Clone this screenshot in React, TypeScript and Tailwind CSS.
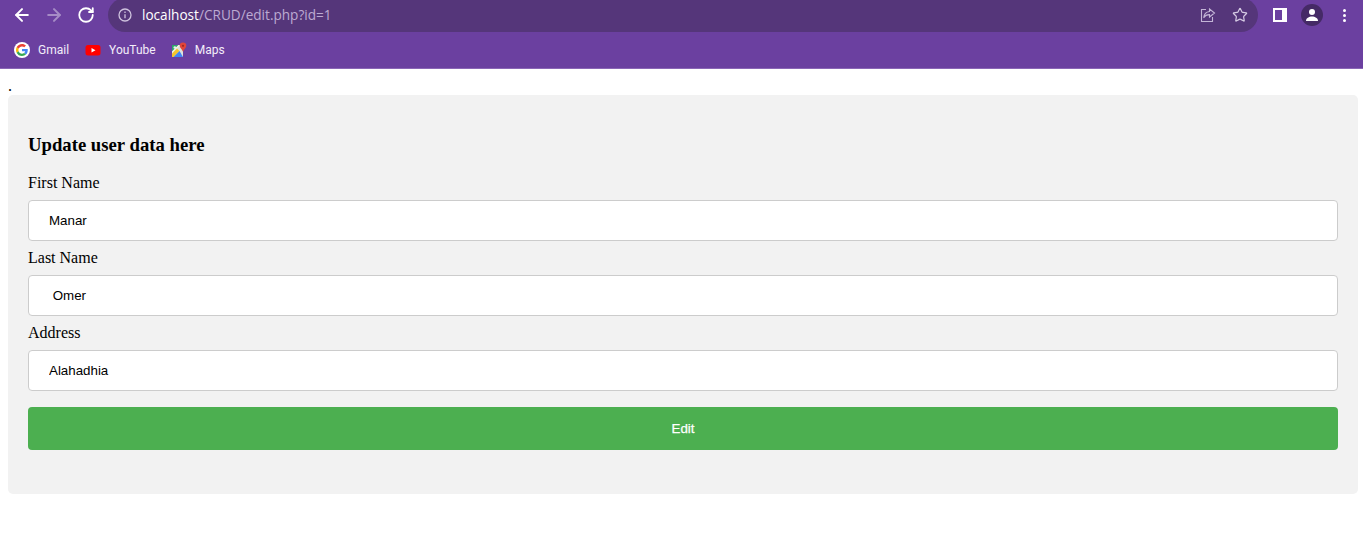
import React from 'react';
import { ArrowLeft, ArrowRight, RotateCw, Star } from 'lucide-react';

function GoogleIcon() {
  return (
    <span className="flex h-4 w-4 items-center justify-center rounded-full bg-white">
      <svg width="12" height="12" viewBox="0 0 48 48">
        <path fill="#EA4335" d="M24 9.5c3.5 0 6.700 1.300 9.100 3.500l6.800-6.800C35.800 2.400 30.300 0 24 0 14.600 0 6.500 5.400 2.600 13.200l7.900 6.200C12.400 13.700 17.700 9.500 24 9.500z" />
        <path fill="#4285F4" d="M47 24.500c0-1.600-.1-3.100-.4-4.500H24v9h12.900c-.6 3-2.200 5.500-4.700 7.200l7.700 6C44.400 38 47 31.800 47 24.500z" />
        <path fill="#FBBC05" d="M10.500 28.600c-.5-1.400-.8-3-.8-4.600s.3-3.200.8-4.600l-7.900-6.200C.9 16.500 0 20.100 0 24s.9 7.500 2.600 10.800l7.900-6.200z" />
        <path fill="#34A853" d="M24 48c6.500 0 11.900-2.100 15.900-5.800l-7.700-6c-2.200 1.400-4.900 2.300-8.200 2.300-6.300 0-11.600-4.200-13.500-9.900l-7.900 6.200C6.500 42.600 14.600 48 24 48z" />
      </svg>
    </span>
  );
}

function YoutubeIcon() {
  return (
    <svg width="16" height="16" viewBox="0 0 16 16">
      <rect x="0.500" y="3" width="15" height="10.500" rx="2.500" fill="#FF0000" />
      <path d="M6.500 6l4 2.250-4 2.250z" fill="#fff" />
    </svg>
  );
}

function MapsIcon() {
  return (
    <svg width="16" height="16" viewBox="0 0 16 16" className="-ml-px">
      <path d="M1 3h11v12H1z" fill="#DDE3DC" />
      <path d="M1 3h6.500L1 9.500z" fill="#2FA36B" />
      <circle cx="3.800" cy="5.500" r="1.300" fill="#E8F3EC" />
      <path d="M1 9.500L7.500 3h1.800L1 11.500z" fill="#F4F1E6" />
      <path d="M1 11.500L6 6.500l2.500 2.500L2.500 15H1z" fill="#F7C52B" />
      <path d="M2.500 15L8.500 9l3.500 6z" fill="#4285F4" />
      <path d="M12 0.500a3.300 3.300 0 0 1 3.300 3.300c0 2-2.300 3.300-3.300 6-1-2.700-3.300-4-3.300-6A3.300 3.300 0 0 1 12 0.500z" fill="#E2453A" />
      <circle cx="12" cy="3.800" r="1.100" fill="#9E2A20" />
    </svg>
  );
}

function Bookmark({ icon, label }: { icon: React.ReactNode; label: string }) {
  return (
    <div className="flex items-center gap-[8px]">
      {icon}
      <span className="font-['Roboto',sans-serif] text-[12px] text-[#f3edf9]">{label}</span>
    </div>
  );
}

function Field({ label, value }: { label: string; value: string }) {
  return (
    <>
      <label className="block text-[16px] leading-[18px]">{label}</label>
      <input
        type="text"
        defaultValue={value}
        className="my-2 block w-full whitespace-pre rounded border border-[#cccccc] bg-white px-5 py-3 font-['Liberation_Sans',Arial,sans-serif] text-[13.333px] leading-[15px] text-black outline-none"
      />
    </>
  );
}

export default function App() {
  return (
    <div className="min-h-[544px] bg-white font-['Liberation_Serif','Times_New_Roman',serif] text-black">
      {/* browser toolbar */}
      <div className="h-[69px] border-b border-[#8a66b5] bg-[#6b40a0] font-['Open_Sans',sans-serif]">
        <div className="flex h-[32px] items-start overflow-hidden pl-[12px] pr-[17px]">
          <div className="flex h-[30px] items-center gap-[12px]">
            <ArrowLeft size={20} strokeWidth={2.4} className="text-white" />
            <ArrowRight size={20} strokeWidth={2.4} className="text-[#a68cc6]" />
            <RotateCw size={18} strokeWidth={2.4} className="ml-[1px] text-white" />
          </div>
          <div className="ml-[13px] -mt-[2px] flex h-[34px] flex-1 items-center rounded-full bg-[#55367a] pl-[10px] pr-[10px]">
            <svg width="14" height="14" viewBox="0 0 14 14" fill="none" stroke="#cfc3de" strokeWidth="1.300">
              <circle cx="7" cy="7" r="6" />
              <path d="M7 6.200v4M7 3.600v1.400" />
            </svg>
            <span className="ml-[10px] text-[13.600px] font-medium text-white">localhost</span>
            <span className="text-[13.600px] text-[#bcaad2]">/CRUD/edit.php?id=1</span>
            <div className="ml-auto flex items-center gap-[16px]">
              <svg width="16" height="16" viewBox="0 0 16 16" fill="none" stroke="#c3b5d6" strokeWidth="1.100">
                <path d="M6 2.500H1.500v12h11V10" />
                <path d="M9.500 2l5 4-5 4V7.600C7 7.600 5 8.500 3.700 10.800 4 7.500 6 5 9.500 4.500z" />
              </svg>
              <Star size={16} strokeWidth={1.800} className="text-[#d5cae3]" />
            </div>
          </div>
          <div className="flex h-[30px] items-center">
            <div className="ml-[15px] flex h-[14px] w-[14px] justify-start border-2 border-white bg-white">
              <div className="h-full w-[7px] bg-[#6b40a0]" />
            </div>
            <div className="ml-[14px] flex h-[22px] w-[22px] items-center justify-center overflow-hidden rounded-full bg-[#452a66]">
              <svg width="14" height="14" viewBox="0 0 14 14" fill="#fff">
                <circle cx="7" cy="4" r="3" />
                <path d="M1 13c0-3 3-4.500 6-4.500s6 1.500 6 4.500z" />
              </svg>
            </div>
            <div className="ml-[20px] flex flex-col gap-[2px]">
              <span className="h-[3px] w-[3px] rounded-full bg-white" />
              <span className="h-[3px] w-[3px] rounded-full bg-white" />
              <span className="h-[3px] w-[3px] rounded-full bg-white" />
            </div>
          </div>
        </div>
        <div className="flex h-[36px] items-center gap-[16px] pl-[14px]">
          <Bookmark icon={<GoogleIcon />} label="Gmail" />
          <Bookmark icon={<YoutubeIcon />} label="YouTube" />
          <Bookmark icon={<MapsIcon />} label="Maps" />
        </div>
      </div>

      {/* page */}
      <div className="pr-[5px] pb-[50px] pl-[8px]">
        <div className="h-[26px] pt-[8px] text-[16px] leading-[18px]">.</div>
        <div className="rounded-[5px] bg-[#f2f2f2] px-5 pt-5 pb-[36px]">
          <h3 className="mt-[19px] mb-[19px] text-[18.720px] leading-[21px] font-bold">Update user data here</h3>
          <form>
            <Field label="First Name" value="Manar" />
            <Field label="Last Name" value=" Omer" />
            <Field label="Address" value="Alahadhia" />
            <button
              type="button"
              className="mt-4 mb-2 block w-full rounded bg-[#4caf50] px-5 py-[14px] font-['Liberation_Sans',Arial,sans-serif] text-[13.333px] leading-[15px] text-white [-webkit-text-stroke:0.25px_white]"
            >
              Edit
            </button>
          </form>
        </div>
      </div>
    </div>
  );
}
